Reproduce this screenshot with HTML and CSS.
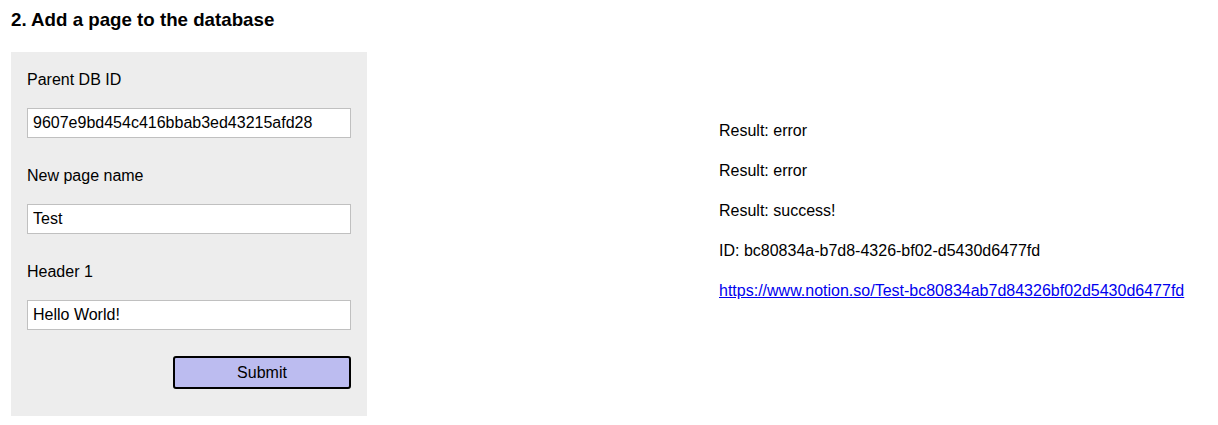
FILE: index.html
```html
<!DOCTYPE html>
<html>
<head>
<meta charset="utf-8">
<link rel="stylesheet" href="styles.css">
</head>
<body>
<div class="page">
  <h2 class="title">2. Add a page to the database</h2>
  <div class="row">
    <form class="panel">
      <label class="label">Parent DB ID</label>
      <input class="field" type="text" value="9607e9bd454c416bbab3ed43215afd28">
      <label class="label">New page name</label>
      <input class="field" type="text" value="Test">
      <label class="label">Header 1</label>
      <input class="field" type="text" value="Hello World!">
      <div class="actions">
        <button class="submit" type="button">Submit</button>
      </div>
    </form>
    <div class="results">
      <p class="line">Result: error</p>
      <p class="line">Result: error</p>
      <p class="line">Result: success!</p>
      <p class="line">ID: bc80834a-b7d8-4326-bf02-d5430d6477fd</p>
      <p class="line"><a class="link" href="#">https://www.notion.so/Test-bc80834ab7d84326bf02d5430d6477fd</a></p>
    </div>
  </div>
</div>
</body>
</html>
```
FILE: styles.css
```css
html, body {
  margin: 0;
  padding: 0;
  background: #ffffff;
}
body {
  font-family: "Liberation Sans", Arial, sans-serif;
  font-size: 16px;
  color: #000;
}
.page {
  padding: 9px 11px;
}
.title {
  margin: 0 0 21px 0;
  font-size: 18.72px;
  font-weight: bold;
  line-height: 22px;
}
.row {
  display: flex;
  align-items: flex-start;
}
.panel {
  width: 356px;
  box-sizing: border-box;
  background: #ededed;
  padding: 16px 16px 27px 16px;
  display: flex;
  flex-direction: column;
}
.label {
  display: block;
  line-height: 22px;
  padding-top: 1px;
  margin-bottom: 17px;
}
.field {
  box-sizing: border-box;
  width: 324px;
  height: 30px;
  margin: 0 0 26px 0;
  padding: 0 5px;
  border: 1px solid #c0c0c0;
  background: #fff;
  font-family: "Liberation Sans", Arial, sans-serif;
  font-size: 16px;
  color: #000;
  outline: none;
}
.actions {
  display: flex;
  justify-content: flex-end;
}
.submit {
  width: 178px;
  height: 33px;
  box-sizing: border-box;
  background: #bcbcf0;
  border: 2px solid #000;
  border-radius: 3px;
  font-family: "Liberation Sans", Arial, sans-serif;
  font-size: 16px;
  color: #000;
  padding: 0;
}
.results {
  margin-left: 352px;
  padding-top: 67px;
}
.line {
  margin: 0 0 16px 0;
  line-height: 24px;
}
.link {
  color: #0000ee;
  text-decoration: underline;
}
```
